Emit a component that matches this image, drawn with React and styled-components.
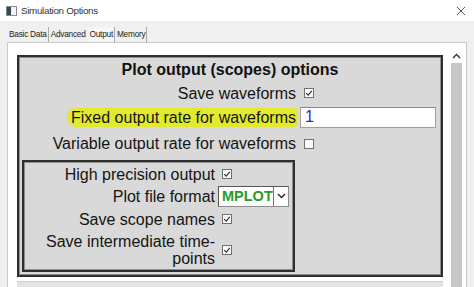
import React from "react";
import styled, { createGlobalStyle } from "styled-components";

const Global = createGlobalStyle`
  html, body { margin: 0; padding: 0; background: #f0f0f0; }
  * { box-sizing: border-box; }
`;

const Window = styled.div`
  width: 474px;
  height: 287px;
  overflow: hidden;
  background: #f0f0f0;
  font-family: "Liberation Sans", Arial, sans-serif;
  color: #1a1a1a;
  display: flex;
  flex-direction: column;
`;

const TitleBar = styled.div`
  height: 21px;
  flex: none;
  background: #ffffff;
  display: flex;
  align-items: center;
  padding: 0 6px 0 6px;
`;

const TitleText = styled.span`
  margin-left: 4px;
  font-family: "Liberation Sans", Arial, sans-serif;
  font-size: 9.8px;
  letter-spacing: -0.3px;
  color: #333;
  flex: 1;
`;

const Close = styled.span`
  width: 12px;
  display: flex;
  justify-content: center;
  margin-right: 1px;
`;

const Body = styled.div`
  flex: 1;
  display: flex;
  flex-direction: column;
  padding: 0 7px 0 7px;
  min-height: 0;
`;

const TabRow = styled.div`
  height: 21px;
  flex: none;
  display: flex;
  align-items: flex-end;
  padding-left: 1px;
`;

const Tab = styled.div`
  height: 15px;
  line-height: 14px;
  font-family: "Liberation Sans", Arial, sans-serif;
  font-size: 8.3px;
  letter-spacing: -0.25px;
  color: #222;
  padding: 0 1px 0 ${p => (p.$first ? "1px" : "2px")};
  border-right: 1px solid ${p => (p.$sep ? "#a8a8a8" : "transparent")};
  background: ${p => (p.$active ? "#f7f7f7" : "transparent")};
`;

const Page = styled.div`
  flex: 1;
  min-height: 0;
  background: #ffffff;
  border: 1px solid #c9c9c9;
  border-bottom: none;
  display: flex;
  padding: 12px 4px 0 9px;
`;

const Content = styled.div`
  width: 426px;
  flex: none;
  display: flex;
  flex-direction: column;
`;

const Group = styled.div`
  width: ${p => p.$w}px;
  border: 2px solid #2e2e2e;
  box-shadow: inset 0 0 0 1px #8e8e8e;
  background: #d9d9d9;
  padding: 1px 1px ${p => p.$pb || 1}px 1px;
  margin: ${p => p.$mt || 0}px 0 0 ${p => p.$ml || 0}px;
  display: flex;
  flex-direction: column;
`;

const NextGroup = styled.div`
  margin-top: 4px;
  height: 20px;
  flex: none;
  background: #e4e4e4;
  border-top: 1px solid #cfcfcf;
`;

const Heading = styled.div`
  height: 24px;
  line-height: 24px;
  text-align: center;
  font-weight: bold;
  font-size: 16px;
  color: #111;
`;

const Row = styled.div`
  height: ${p => p.$h}px;
  display: grid;
  grid-template-columns: ${p => p.$label}px 1fr;
  column-gap: ${p => p.$gap}px;
  align-items: center;
`;

const Label = styled.div`
  text-align: right;
  font-size: 16px;
  line-height: 17px;
  color: #141414;
`;

const Highlight = styled.span`
  background: #e2ea2e;
  border-radius: 9px 4px 4px 9px;
  padding: 1px 2px 1px 4px;
  margin-right: -2px;
`;

const Box = styled.span`
  width: 10px;
  height: 10px;
  margin-left: 4px;
  border: 1px solid #707070;
  background: #fbfbfb;
  display: flex;
  align-items: center;
  justify-content: center;
`;

const TextInput = styled.div`
  width: 136px;
  height: 21px;
  background: #ffffff;
  border: 1px solid #a0a0a0;
  border-top-color: #8a8a8a;
  font-size: 16px;
  line-height: 17px;
  color: #1f2bc8;
  padding: 0 0 0 4px;
`;

const Select = styled.div`
  width: 71px;
  height: 21px;
  display: flex;
  border: 1px solid #8c8c8c;
  border-top-color: #555;
  border-left-color: #555;
  background: #ffffff;
`;

const SelectValue = styled.span`
  flex: 1;
  font-weight: bold;
  font-size: 14.5px;
  line-height: 19px;
  color: #2a9a2a;
  padding-left: 3px;
`;

const SelectButton = styled.span`
  width: 15px;
  border-left: 1px solid #777;
  display: flex;
  align-items: center;
  justify-content: center;
  background: #fdfdfd;
`;

const ScrollBar = styled.div`
  width: 11px;
  margin-left: 8px;
  flex: none;
  display: flex;
  flex-direction: column;
  margin-top: -6px;
`;

const ScrollArrow = styled.div`
  height: 14px;
  display: flex;
  align-items: center;
  justify-content: center;
`;

const Thumb = styled.div`
  flex: 1;
  background: #c7c7c7;
`;

const Check = ({ on }) => (
  <Box>
    {on && (
      <svg width="8" height="8" viewBox="0 0 8 8">
        <path d="M1.2 4.2 L3.2 6.2 L6.8 1.8" fill="none" stroke="#333" strokeWidth="1.2" />
      </svg>
    )}
  </Box>
);

const AppIcon = () => (
  <svg width="11" height="10" viewBox="0 0 11 10">
    <rect x="0.5" y="0.5" width="10" height="9" fill="#f4f4f4" stroke="#8a8a8a" />
    <rect x="1" y="1" width="4" height="8" fill="#2f4a55" />
  </svg>
);

export default function App() {
  return (
    <>
      <Global />
      <Window>
        <TitleBar>
          <AppIcon />
          <TitleText>Simulation Options</TitleText>
          <Close>
            <svg width="10" height="10" viewBox="0 0 10 10">
              <path d="M1 1 L9 9 M9 1 L1 9" stroke="#555" strokeWidth="1" />
            </svg>
          </Close>
        </TitleBar>
        <Body>
          <TabRow>
            <Tab $first $sep>Basic Data</Tab>
            <Tab>Advanced</Tab>
            <Tab $sep $active>Output</Tab>
            <Tab $sep>Memory</Tab>
          </TabRow>
          <Page>
            <Content>
              <Group $w={426} $pb={3}>
                <Heading>Plot output (scopes) options</Heading>
                <Row $h={22} $label={276} $gap={4}>
                  <Label>Save waveforms</Label>
                  <Check on />
                </Row>
                <Row $h={26} $label={276} $gap={4}>
                  <Label>
                    <Highlight>Fixed output rate for waveforms</Highlight>
                  </Label>
                  <TextInput>1</TextInput>
                </Row>
                <Row $h={27} $label={276} $gap={4}>
                  <Label>Variable output rate for waveforms</Label>
                  <Check />
                </Row>
                <Group $w={273} $mt={3} $ml={2}>
                  <Row $h={22} $label={190} $gap={3}>
                    <Label>High precision output</Label>
                    <Check on />
                  </Row>
                  <Row $h={22} $label={190} $gap={3}>
                    <Label>Plot file format</Label>
                    <Select>
                      <SelectValue>MPLOT</SelectValue>
                      <SelectButton>
                        <svg width="9" height="6" viewBox="0 0 9 6">
                          <path d="M1 1 L4.5 4.5 L8 1" fill="none" stroke="#222" strokeWidth="1.3" />
                        </svg>
                      </SelectButton>
                    </Select>
                  </Row>
                  <Row $h={24} $label={190} $gap={3}>
                    <Label>Save scope names</Label>
                    <Check on />
                  </Row>
                  <Row $h={38} $label={190} $gap={3}>
                    <Label>Save intermediate time-points</Label>
                    <Check on />
                  </Row>
                </Group>
              </Group>
              <NextGroup />
            </Content>
            <ScrollBar>
              <ScrollArrow>
                <svg width="9" height="6" viewBox="0 0 9 6">
                  <path d="M1 5 L4.5 1.5 L8 5" fill="none" stroke="#333" strokeWidth="1.4" />
                </svg>
              </ScrollArrow>
              <Thumb />
            </ScrollBar>
          </Page>
        </Body>
      </Window>
    </>
  );
}
